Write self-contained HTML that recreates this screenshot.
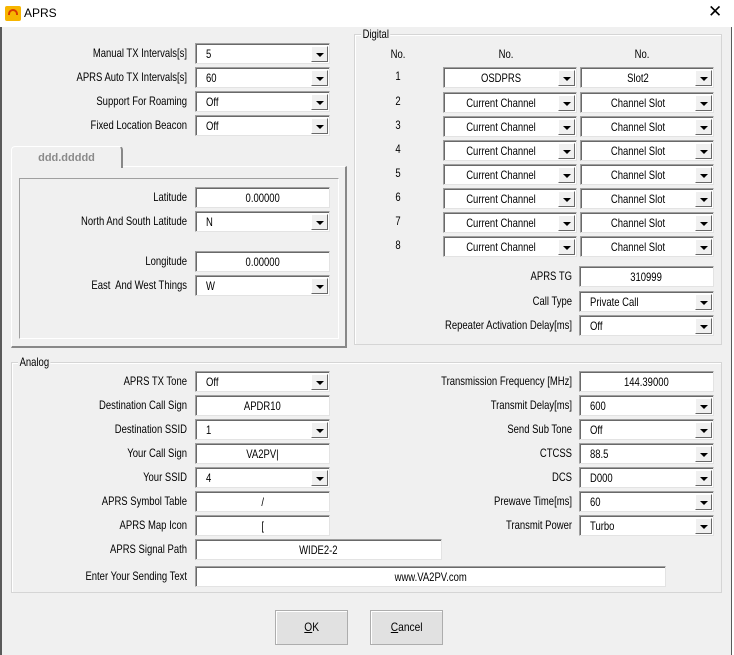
<!DOCTYPE html>
<html><head><meta charset="utf-8"><style>
*{box-sizing:border-box;margin:0;padding:0}
body{width:734px;height:655px;background:#f0f0f0;font-family:"Liberation Sans",sans-serif;font-size:12px;color:#000;position:relative;overflow:hidden}
.a{position:absolute}
.title{left:0;top:0;width:734px;height:27px;background:#fff}
.lb{position:absolute;text-align:right;width:180px;height:20px;line-height:20px;white-space:nowrap;transform:scaleX(.79);transform-origin:right center}
.cb,.tx{position:absolute;height:21px;background:#fff;border:1px solid #a0a0a0;border-right-color:#e3e3e3;border-bottom-color:#e3e3e3;box-shadow:inset 1px 1px 0 #696969;line-height:19px;white-space:nowrap;overflow:hidden}
.cb span{position:absolute;left:10px;top:1px;transform:scaleX(.79);transform-origin:left center}
.cb.c span{left:0;right:18px;text-align:center;transform-origin:center}
.tx{text-align:center;padding-top:1px}
.tx span{display:inline-block;transform:scaleX(.79)}
.cb i{position:absolute;right:1px;top:2px;width:17px;height:16px;background:#f0f0f0;border:1px solid #fff;border-right-color:#696969;border-bottom-color:#696969}
.cb i:after{content:"";position:absolute;left:4px;top:6px;border-left:4px solid transparent;border-right:4px solid transparent;border-top:4px solid #000}
.grp{position:absolute;border:1px solid #d5d5d5;box-shadow:1px 1px 0 #fff inset}
.gl{position:absolute;background:#f0f0f0;padding:0 2px;line-height:12px;transform:scaleX(.79);transform-origin:left center}
.btn{position:absolute;width:73px;height:35px;border:1px solid #adadad;background:#e1e1e1;box-shadow:inset 1px 1px 0 #fff;text-align:center;line-height:33px}
.btn span{display:inline-block;transform:scaleX(.85)}
.n{position:absolute;width:30px;text-align:center;transform:scaleX(.79)}
</style></head><body>
<div class="a title"></div>
<div class="a" style="left:5px;top:6px;width:16px;height:15px;background:#f7b500;border-radius:2px"><div style="position:absolute;left:3px;top:3px;width:10px;height:6px;border:2px solid #d93a00;border-bottom:none;border-radius:6px 6px 0 0"></div></div>
<div class="a" style="left:24px;top:6px;font-size:12px">APRS</div>
<div class="a" style="left:708px;top:2px;font-size:17px">✕</div>
<div class="a" style="left:0;top:27px;width:2px;height:628px;background:#5a5a5a"></div>
<div class="a" style="left:731px;top:27px;width:3px;height:628px;background:#fff;border-left:1px solid #5a5a5a"></div>

<div class="lb" style="left:7px;top:43px">Manual TX Intervals[s]</div>
<div class="cb" style="left:195px;top:43px;width:135px"><span>5</span><i></i></div>
<div class="lb" style="left:7px;top:67px">APRS Auto TX Intervals[s]</div>
<div class="cb" style="left:195px;top:67px;width:135px"><span>60</span><i></i></div>
<div class="lb" style="left:7px;top:91px">Support For Roaming</div>
<div class="cb" style="left:195px;top:91px;width:135px"><span>Off</span><i></i></div>
<div class="lb" style="left:7px;top:115px">Fixed Location Beacon</div>
<div class="cb" style="left:195px;top:115px;width:135px"><span>Off</span><i></i></div>

<div class="a" style="left:11px;top:166px;width:336px;height:182px;border:1px solid #fff;border-right:2px solid #888;border-bottom:2px solid #888;background:#f0f0f0"></div>
<div class="a" style="left:11px;top:146px;width:112px;height:22px;border:1px solid #fff;border-right:2px solid #888;border-bottom:none;border-radius:4px 4px 0 0;background:#f0f0f0;color:#8a8a8a;font-weight:bold;text-align:center;line-height:22px;font-size:11px">ddd.ddddd</div>
<div class="a" style="left:19px;top:178px;width:320px;height:161px;border:1px solid #a0a0a0;border-right-color:#fff;border-bottom-color:#fff"></div>
<div class="lb" style="left:7px;top:187px">Latitude</div>
<div class="tx" style="left:195px;top:187px;width:135px"><span>0.00000</span></div>
<div class="lb" style="left:7px;top:211px">North And South Latitude</div>
<div class="cb" style="left:195px;top:211px;width:135px"><span>N</span><i></i></div>
<div class="lb" style="left:7px;top:251px">Longitude</div>
<div class="tx" style="left:195px;top:251px;width:135px"><span>0.00000</span></div>
<div class="lb" style="left:7px;top:275px">East&nbsp; And West Things</div>
<div class="cb" style="left:195px;top:275px;width:135px"><span>W</span><i></i></div>

<div class="grp" style="left:354px;top:34px;width:368px;height:311px"></div>
<div class="gl" style="left:361px;top:28px">Digital</div>
<div class="n" style="left:383px;top:47px">No.</div>
<div class="n" style="left:491px;top:47px">No.</div>
<div class="n" style="left:627px;top:47px">No.</div>

<div class="n" style="left:383px;top:69px">1</div>
<div class="cb c" style="left:443px;top:67px;width:134px"><span>OSDPRS</span><i></i></div>
<div class="cb c" style="left:580px;top:67px;width:134px"><span>Slot2</span><i></i></div>
<div class="n" style="left:383px;top:94px">2</div>
<div class="cb c" style="left:443px;top:92px;width:134px"><span>Current Channel</span><i></i></div>
<div class="cb c" style="left:580px;top:92px;width:134px"><span>Channel Slot</span><i></i></div>
<div class="n" style="left:383px;top:118px">3</div>
<div class="cb c" style="left:443px;top:116px;width:134px"><span>Current Channel</span><i></i></div>
<div class="cb c" style="left:580px;top:116px;width:134px"><span>Channel Slot</span><i></i></div>
<div class="n" style="left:383px;top:142px">4</div>
<div class="cb c" style="left:443px;top:140px;width:134px"><span>Current Channel</span><i></i></div>
<div class="cb c" style="left:580px;top:140px;width:134px"><span>Channel Slot</span><i></i></div>
<div class="n" style="left:383px;top:166px">5</div>
<div class="cb c" style="left:443px;top:164px;width:134px"><span>Current Channel</span><i></i></div>
<div class="cb c" style="left:580px;top:164px;width:134px"><span>Channel Slot</span><i></i></div>
<div class="n" style="left:383px;top:190px">6</div>
<div class="cb c" style="left:443px;top:188px;width:134px"><span>Current Channel</span><i></i></div>
<div class="cb c" style="left:580px;top:188px;width:134px"><span>Channel Slot</span><i></i></div>
<div class="n" style="left:383px;top:214px">7</div>
<div class="cb c" style="left:443px;top:212px;width:134px"><span>Current Channel</span><i></i></div>
<div class="cb c" style="left:580px;top:212px;width:134px"><span>Channel Slot</span><i></i></div>
<div class="n" style="left:383px;top:238px">8</div>
<div class="cb c" style="left:443px;top:236px;width:134px"><span>Current Channel</span><i></i></div>
<div class="cb c" style="left:580px;top:236px;width:134px"><span>Channel Slot</span><i></i></div>

<div class="lb" style="left:392px;top:266px">APRS TG</div>
<div class="tx" style="left:579px;top:266px;width:135px"><span>310999</span></div>
<div class="lb" style="left:392px;top:291px">Call Type</div>
<div class="cb" style="left:579px;top:291px;width:135px"><span>Private Call</span><i></i></div>
<div class="lb" style="left:392px;top:315px">Repeater Activation Delay[ms]</div>
<div class="cb" style="left:579px;top:315px;width:135px"><span>Off</span><i></i></div>

<div class="grp" style="left:11px;top:362px;width:711px;height:231px"></div>
<div class="gl" style="left:18px;top:356px">Analog</div>
<div class="lb" style="left:7px;top:371px">APRS TX Tone</div>
<div class="cb" style="left:195px;top:371px;width:135px"><span>Off</span><i></i></div>
<div class="lb" style="left:7px;top:395px">Destination Call Sign</div>
<div class="tx" style="left:195px;top:395px;width:135px"><span>APDR10</span></div>
<div class="lb" style="left:7px;top:419px">Destination SSID</div>
<div class="cb" style="left:195px;top:419px;width:135px"><span>1</span><i></i></div>
<div class="lb" style="left:7px;top:443px">Your Call Sign</div>
<div class="tx" style="left:195px;top:443px;width:135px"><span>VA2PV|</span></div>
<div class="lb" style="left:7px;top:467px">Your SSID</div>
<div class="cb" style="left:195px;top:467px;width:135px"><span>4</span><i></i></div>
<div class="lb" style="left:7px;top:491px">APRS Symbol Table</div>
<div class="tx" style="left:195px;top:491px;width:135px"><span>/</span></div>
<div class="lb" style="left:7px;top:515px">APRS Map Icon</div>
<div class="tx" style="left:195px;top:515px;width:135px"><span>[</span></div>
<div class="lb" style="left:7px;top:539px">APRS Signal Path</div>
<div class="tx" style="left:195px;top:539px;width:247px"><span>WIDE2-2</span></div>
<div class="lb" style="left:7px;top:566px">Enter Your Sending Text</div>
<div class="tx" style="left:195px;top:566px;width:471px"><span>www.VA2PV.com</span></div>

<div class="lb" style="left:392px;top:371px">Transmission Frequency [MHz]</div>
<div class="tx" style="left:579px;top:371px;width:135px"><span>144.39000</span></div>
<div class="lb" style="left:392px;top:395px">Transmit Delay[ms]</div>
<div class="cb" style="left:579px;top:395px;width:135px"><span>600</span><i></i></div>
<div class="lb" style="left:392px;top:419px">Send Sub Tone</div>
<div class="cb" style="left:579px;top:419px;width:135px"><span>Off</span><i></i></div>
<div class="lb" style="left:392px;top:443px">CTCSS</div>
<div class="cb" style="left:579px;top:443px;width:135px"><span>88.5</span><i></i></div>
<div class="lb" style="left:392px;top:467px">DCS</div>
<div class="cb" style="left:579px;top:467px;width:135px"><span>D000</span><i></i></div>
<div class="lb" style="left:392px;top:491px">Prewave Time[ms]</div>
<div class="cb" style="left:579px;top:491px;width:135px"><span>60</span><i></i></div>
<div class="lb" style="left:392px;top:515px">Transmit Power</div>
<div class="cb" style="left:579px;top:515px;width:135px"><span>Turbo</span><i></i></div>

<div class="btn" style="left:275px;top:610px"><span><u>O</u>K</span></div>
<div class="btn" style="left:370px;top:610px"><span><u>C</u>ancel</span></div>
</body></html>
